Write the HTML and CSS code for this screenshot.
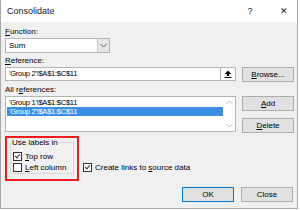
FILE: index.html
```html
<!DOCTYPE html>
<html lang="en">
<head>
    <meta charset="UTF-8">
    <title>Consolidate</title>
    <link rel="stylesheet" href="styles.css">
</head>
<body>

<div class="dialog">
    <div class="titlebar">
        <span class="title">Consolidate</span>
        <span class="help">?</span>
        <span class="close-x">&#x2715;</span>
    </div>

    <div class="content">
        <div class="label"><u>F</u>unction:</div>
        <div class="combo">
            <span class="combo-text">Sum</span>
            <span class="combo-arrow">
                <svg width="7" height="5" viewBox="0 0 7 5"><path d="M0.5 1 L3.5 4 L6.5 1" fill="none" stroke="#606060" stroke-width="1"/></svg>
            </span>
        </div>

        <div class="label"><u>R</u>eference:</div>
        <div class="row">
            <div class="ref-input">
                <span class="ref-text">'Group 2'!$A$1:$C$11</span>
                <span class="pick">
                    <svg width="8" height="8" viewBox="0 0 8 8"><path d="M4 0.5 L7.5 4 L5.2 4 L5.2 6 L2.8 6 L2.8 4 L0.5 4 Z" fill="#111"/><rect x="0.5" y="7" width="7" height="1" fill="#111"/></svg>
                </span>
            </div>
            <button class="btn"><u>B</u>rowse...</button>
        </div>

        <div class="label">All r<u>e</u>ferences:</div>
        <div class="row">
            <div class="listbox">
                <div class="items">
                    <div class="item">'Group 1'!$A$1:$C$11</div>
                    <div class="item selected">'Group 2'!$A$1:$C$11</div>
                </div>
                <div class="scrollbar">
                    <svg width="7" height="5" viewBox="0 0 7 5"><path d="M0.5 4 L3.5 1 L6.5 4" fill="none" stroke="#bcbcbc" stroke-width="1"/></svg>
                    <svg width="7" height="5" viewBox="0 0 7 5"><path d="M0.5 1 L3.5 4 L6.5 1" fill="none" stroke="#bcbcbc" stroke-width="1"/></svg>
                </div>
            </div>
            <div class="side-buttons">
                <button class="btn"><u>A</u>dd</button>
                <button class="btn"><u>D</u>elete</button>
            </div>
        </div>

        <div class="options">
            <div class="highlight">
                <fieldset class="group">
                    <legend>Use labels in</legend>
                    <label class="check"><span class="box checked"></span><span><u>T</u>op row</span></label>
                    <label class="check"><span class="box"></span><span><u>L</u>eft column</span></label>
                </fieldset>
            </div>
            <label class="check links"><span class="box checked"></span><span>Create links to <u>s</u>ource data</span></label>
        </div>

        <div class="footer">
            <button class="btn default">OK</button>
            <button class="btn">Close</button>
        </div>
    </div>
</div>

</body>
</html>
```

FILE: styles.css
```css
body {
    margin: 0;
    background-color: #fff;
    font-family: "Liberation Sans", Arial, sans-serif;
    font-size: 8px;
    color: #000;
}
.dialog {
    width: 298px;
    height: 209px;
    box-sizing: border-box;
    border: 1px solid #a8a8a8;
    border-top: none;
    background-color: #f0f0f0;
    display: flex;
    flex-direction: column;
}
.titlebar {
    height: 22px;
    background-color: #fff;
    display: flex;
    align-items: center;
    padding-left: 6px;
    font-size: 9px;
    color: #222;
}
.title {
    flex: 1;
}
.help {
    width: 12px;
    margin-right: 22px;
    text-align: center;
}
.close-x {
    width: 12px;
    margin-right: 7px;
    text-align: center;
    font-size: 9px;
}
.content {
    padding: 5px 3px 0 4px;
}
.label {
    height: 10px;
    line-height: 10px;
    margin-bottom: 1px;
}
.combo {
    width: 105px;
    height: 15px;
    box-sizing: border-box;
    border: 1px solid #b5b5b5;
    background-color: #fff;
    display: flex;
    margin-bottom: 3px;
}
.combo-text {
    flex: 1;
    line-height: 13px;
    padding-left: 3px;
}
.combo-arrow {
    width: 11px;
    background-color: #e6e6e6;
    border-left: 1px solid #c8c8c8;
    display: flex;
    align-items: center;
    justify-content: center;
}
.row {
    display: flex;
    gap: 6px;
    margin-bottom: 3px;
}
.ref-input {
    width: 231px;
    height: 14px;
    box-sizing: border-box;
    border: 1px solid #b5b5b5;
    background-color: #fff;
    display: flex;
}
.ref-text {
    flex: 1;
    line-height: 12px;
    padding-left: 3px;
    font-size: 7.6px;
    letter-spacing: -0.3px;
}
.pick {
    width: 14px;
    border-left: 1px solid #b5b5b5;
    display: flex;
    align-items: center;
    justify-content: center;
}
.btn {
    width: 52px;
    height: 15px;
    padding: 0;
    font-family: inherit;
    font-size: 8px;
    color: #000;
    background-color: #e1e1e1;
    border: 1px solid #adadad;
    border-radius: 0;
}
.listbox {
    width: 231px;
    height: 36px;
    box-sizing: border-box;
    border: 1px solid #b5b5b5;
    background-color: #fff;
    display: flex;
}
.items {
    flex: 1;
    padding: 1px 0 0 1px;
}
.item {
    height: 9px;
    line-height: 9px;
    padding-left: 2px;
    font-size: 7.6px;
    letter-spacing: -0.3px;
}
.item.selected {
    background-color: #3a8fe4;
    color: #fff;
}
.scrollbar {
    width: 12px;
    display: flex;
    flex-direction: column;
    justify-content: space-between;
    align-items: center;
    padding: 3px 0;
}
.side-buttons {
    display: flex;
    flex-direction: column;
    gap: 7px;
}
.options {
    display: flex;
    align-items: flex-end;
    margin-top: 3px;
}
.highlight {
    border: 2px solid #ee1c1c;
    padding: 0 3px 2px 3px;
    width: 64px;
    height: 39px;
}
.group {
    margin: 0;
    padding: 4px 0 0 2px;
    border: 1px solid #d9d9d9;
    height: 30px;
}
.group legend {
    padding: 0;
    margin-left: -1px;
    line-height: 9px;
}
.check {
    display: flex;
    align-items: center;
    height: 11px;
    gap: 3px;
}
.box {
    width: 7px;
    height: 7px;
    border: 1px solid #333;
    background-color: #fff;
    position: relative;
}
.box.checked::after {
    content: "";
    position: absolute;
    left: 2px;
    top: 0;
    width: 2px;
    height: 4px;
    border: solid #333;
    border-width: 0 1px 1px 0;
    transform: rotate(40deg);
}
.links {
    margin-left: 4px;
    margin-bottom: 8px;
}
.footer {
    display: flex;
    justify-content: flex-end;
    gap: 7px;
    margin-top: 6px;
    padding-right: 1px;
}
.btn.default {
    border-color: #0078d7;
}
```
